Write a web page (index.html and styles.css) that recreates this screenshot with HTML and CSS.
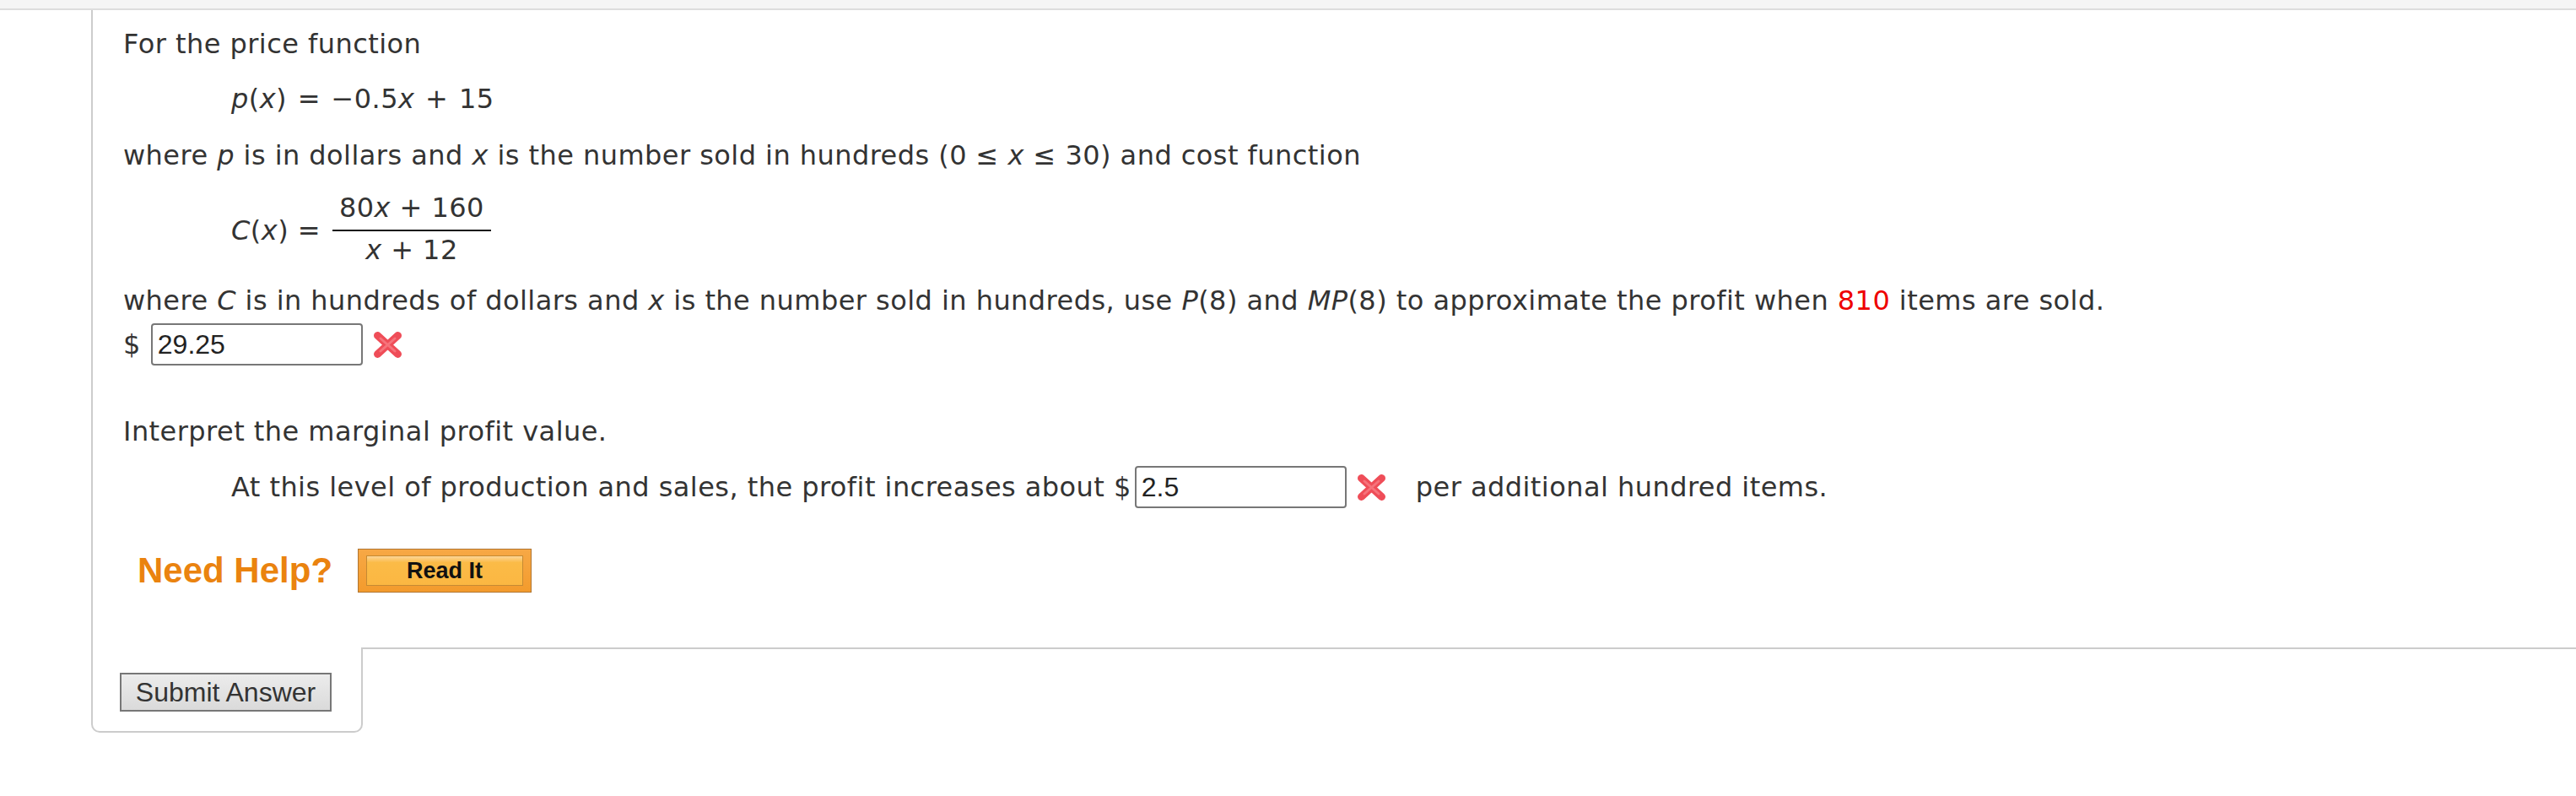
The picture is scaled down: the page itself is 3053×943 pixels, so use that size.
FILE: index.html
```html
<!DOCTYPE html>
<html>
<head>
<meta charset="utf-8">
<title>Question</title>
<link rel="stylesheet" href="styles.css">
</head>
<body>
<div class="topbar"></div>
<div class="question">
  <p class="line l1">For the price function</p>
  <p class="line indent m1"><i>p</i>(<i>x</i>) = &minus;0.5<i>x</i> + 15</p>
  <p class="line l3">where <i>p</i> is in dollars and <i>x</i> is the number sold in hundreds (0 &le; <i>x</i> &le; 30) and cost function</p>
  <div class="eq indent">
    <span class="eq-label"><i>C</i>(<i>x</i>) =</span>
    <span class="frac"><span class="num">80<i>x</i> + 160</span><span class="den"><i>x</i> + 12</span></span>
  </div>
  <p class="line l5">where <i>C</i> is in hundreds of dollars and <i>x</i> is the number sold in hundreds, use <i>P</i>(8) and <i>MP</i>(8) to approximate the profit when <span class="red">810</span> items are sold.</p>
  <div class="answer-row a1">
    <span class="dollar">$</span>
    <input class="ans" type="text" value="29.25">
    <svg class="wrong" width="33" height="31" viewBox="0 0 33 31"><path d="M4.5 4.5 L28.5 26.5 M28.5 4.5 L4.5 26.5" stroke="#ef4d58" stroke-width="9" stroke-linecap="round" fill="none"/><path d="M8 8 L25 23 M25 8 L8 23" stroke="#f6737b" stroke-width="3" stroke-linecap="round" fill="none"/></svg>
  </div>
  <p class="line interp">Interpret the marginal profit value.</p>
  <div class="answer-row a2 indent">
    <span>At this level of production and sales, the profit increases about $</span>
    <input class="ans ans2" type="text" value="2.5">
    <svg class="wrong" width="33" height="31" viewBox="0 0 33 31"><path d="M4.5 4.5 L28.5 26.5 M28.5 4.5 L4.5 26.5" stroke="#ef4d58" stroke-width="9" stroke-linecap="round" fill="none"/><path d="M8 8 L25 23 M25 8 L8 23" stroke="#f6737b" stroke-width="3" stroke-linecap="round" fill="none"/></svg>
    <span class="after">per additional hundred items.</span>
  </div>
  <div class="help-row">
    <span class="need-help">Need Help?</span>
    <button class="readit" type="button"><span class="readit-inner">Read It</span></button>
  </div>
</div>
<div class="footer">
  <div class="tab"><button class="submit" type="button">Submit Answer</button></div>
  <div class="rest"></div>
</div>
</body>
</html>
```

FILE: styles.css
```css
html, body {
  margin: 0;
  padding: 0;
  background: #ffffff;
}
body {
  font-family: "DejaVu Sans", Verdana, sans-serif;
  font-size: 32px;
  color: #333333;
}
.topbar {
  height: 10px;
  background: #f5f5f5;
  border-bottom: 2px solid #dddddd;
}
.question {
  margin-left: 108px;
  border-left: 2px solid #cccccc;
  padding: 20px 0 65px 36px;
  letter-spacing: 0.45px;
}
.line {
  margin: 0;
  line-height: 40px;
  white-space: nowrap;
}
.indent {
  margin-left: 128px;
}
.m1 {
  margin-top: 25px;
  word-spacing: 2px;
}
.l3 { margin-top: 27px; }
.eq {
  display: flex;
  align-items: center;
  margin-top: 24px;
}
.eq-label {
  line-height: 36px;
  padding-top: 4px;
}
.frac {
  display: flex;
  flex-direction: column;
  align-items: stretch;
  margin-left: 14px;
  text-align: center;
}
.num {
  line-height: 36px;
  padding: 0 8px 8px;
  border-bottom: 2px solid #111111;
}
.den {
  line-height: 36px;
  padding-top: 4px;
}
.l5 { margin-top: 22px; }
.red { color: #ee0000; }
.answer-row {
  display: flex;
  align-items: center;
  height: 50px;
  line-height: 40px;
  white-space: nowrap;
}
.a1 { margin-top: 7px; }
.dollar { margin-right: 12px; }
.ans {
  box-sizing: border-box;
  width: 251px;
  height: 50px;
  margin: 0;
  border: 2px solid #777777;
  border-radius: 4px;
  padding: 0 6px;
  font-family: "Liberation Sans", Arial, sans-serif;
  font-size: 32px;
  letter-spacing: 0;
  color: #222222;
  background: #ffffff;
}
.ans2 { margin-left: 4px; }
.wrong {
  margin-left: 13px;
  flex: none;
}
.after { margin-left: 36px; }
.interp { margin-top: 58px; }
.a2 { margin-top: 21px; }
.help-row {
  display: flex;
  align-items: center;
  margin-top: 48px;
  margin-left: 17px;
  height: 52px;
  letter-spacing: 0;
}
.need-help {
  font-family: "Liberation Sans", Arial, sans-serif;
  font-weight: bold;
  font-size: 42px;
  line-height: 48px;
  color: #ea830f;
}
.readit {
  box-sizing: border-box;
  width: 206px;
  height: 52px;
  margin: 0 0 0 30px;
  padding: 7px 9px;
  border: 1px solid #b07531;
  background: linear-gradient(#f7a845, #f39b2c);
  display: flex;
  cursor: pointer;
}
.readit-inner {
  flex: 1;
  display: flex;
  align-items: center;
  justify-content: center;
  border: 1px solid #c58a33;
  background: linear-gradient(#fdd596 0, #fbbb47 22%, #fbb742 100%);
  font-family: "Liberation Sans", Arial, sans-serif;
  font-weight: bold;
  font-size: 27px;
  color: #111111;
}
.footer {
  display: flex;
}
.tab {
  margin-left: 108px;
  width: 286px;
  border-left: 2px solid #cccccc;
  border-right: 2px solid #cccccc;
  border-bottom: 2px solid #cccccc;
  border-radius: 0 0 10px 10px;
  padding: 30px 0 23px 32px;
}
.submit {
  box-sizing: border-box;
  width: 251px;
  height: 46px;
  margin: 0;
  padding: 0;
  border: 2px solid #777777;
  border-radius: 0;
  background: linear-gradient(#ececec, #dadada);
  font-family: "Liberation Sans", Arial, sans-serif;
  font-size: 32px;
  color: #333333;
  cursor: pointer;
}
.rest {
  flex: 1;
  border-top: 2px solid #cccccc;
}
```
